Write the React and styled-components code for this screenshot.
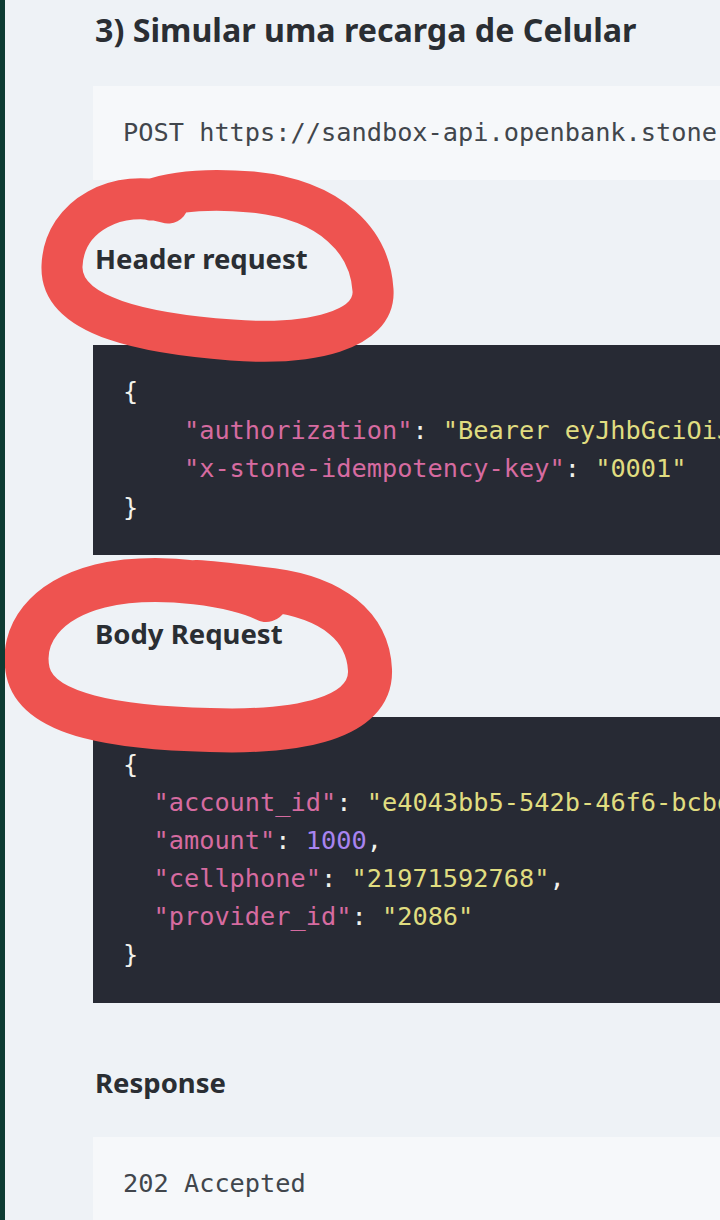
import styled, { createGlobalStyle } from 'styled-components';

const Global = createGlobalStyle`
  html, body { margin: 0; padding: 0; background: #eef2f6; }
  #root { overflow: hidden; }
`;

const Page = styled.div`
  min-height: 1220px;
  box-sizing: border-box;
  border-left: 5px solid #0d3b33;
  padding: 10px 0 0 90px;
  overflow: hidden;
  font-family: "Noto Sans", "Open Sans", sans-serif;
  color: #2a2e33;
`;

const Title = styled.h2`
  margin: 0;
  font-size: 32.2px;
  line-height: 40px;
  font-weight: 700;
`;

const Label = styled.h3`
  position: relative;
  margin: ${p => p.$top}px 0 ${p => p.$bottom}px;
  font-size: 27.5px;
  line-height: 34px;
  font-weight: 700;
`;

const Mark = styled.svg`
  position: absolute;
  left: ${p => p.$x}px;
  top: ${p => p.$y}px;
  pointer-events: none;
  z-index: 2;
  overflow: visible;
`;

const CodeBox = styled.pre`
  margin: ${p => p.$top || 0}px 0 0 -2px;
  padding: ${p => p.$pad || 28}px 0 ${p => p.$pad || 28}px 30px;
  background: ${p => (p.$dark ? '#272a34' : '#f6f8fa')};
  color: ${p => (p.$dark ? '#f2f2ec' : '#41464c')};
  font-family: "DejaVu Sans Mono", "Liberation Mono", monospace;
  font-size: 25.3px;
  line-height: ${p => p.$lh || 38}px;
  white-space: pre;
  overflow: hidden;
`;

const Key = styled.span`color: #d66ba0;`;
const Str = styled.span`color: #e0dd80;`;
const Num = styled.span`color: #a884f0;`;

const RED = '#ee5350';

function Circle({ x, y, w, h, box, d, width }) {
  return (
    <Mark $x={x} $y={y} width={w} height={h} viewBox={box}>
      <path d={d} fill="none" stroke={RED} strokeWidth={width} strokeLinecap="round" strokeLinejoin="round" />
    </Mark>
  );
}

export default function App() {
  return (
    <>
      <Global />
      <Page>
        <Title>3) Simular uma recarga de Celular</Title>
        <CodeBox $top={36}>POST https://sandbox-api.openbank.stone.com.br/api/v1/top_ups/simulation</CodeBox>

        <Label $top={62} $bottom={69}>
          Header request
          <Circle
            x={-75} y={-92} w={400} h={240} box="20 150 400 240" width={41}
            d="M 168 203 C 120 188, 64 214, 62 266 C 60 318, 150 334, 232 340 C 312 346, 376 330, 373 290 C 370 242, 332 200, 252 192 C 205 188, 172 192, 150 200"
          />
        </Label>
        <CodeBox $dark $lh={38.5}>
          {'{\n    '}<Key>"authorization"</Key>{': '}<Str>"Bearer eyJhbGciOiJSUzI1NiIsInR5cCI6IkpXVCJ9"</Str>{',\n    '}
          <Key>"x-stone-idempotency-key"</Key>{': '}<Str>"0001"</Str>{'\n}'}
        </CodeBox>

        <Label $top={62} $bottom={66}>
          Body Request
          <Circle
            x={-115} y={-87} w={440} h={260} box="-20 530 440 260" width={44}
            d="M 266 600 C 240 586, 160 572, 100 586 C 45 600, 20 635, 28 672 C 38 716, 120 728, 210 730 C 300 733, 372 718, 370 670 C 368 626, 332 598, 272 590 C 240 586, 214 583, 196 582"
          />
        </Label>
        <CodeBox $dark $pad={29}>
          {'{\n  '}<Key>"account_id"</Key>{': '}<Str>"e4043bb5-542b-46f6-bcbd-5f1c2a9e7d10"</Str>{',\n  '}
          <Key>"amount"</Key>{': '}<Num>1000</Num>{',\n  '}
          <Key>"cellphone"</Key>{': '}<Str>"21971592768"</Str>{',\n  '}
          <Key>"provider_id"</Key>{': '}<Str>"2086"</Str>{'\n}'}
        </CodeBox>

        <Label $top={63} $bottom={37}>Response</Label>
        <CodeBox>202 Accepted</CodeBox>
      </Page>
    </>
  );
}
